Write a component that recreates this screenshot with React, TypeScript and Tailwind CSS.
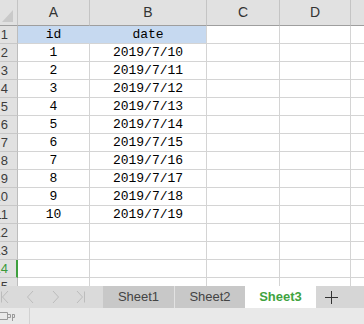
import React from "react";

const rows: [string, string][] = [
  ["id", "date"],
  ["1", "2019/7/10"],
  ["2", "2019/7/11"],
  ["3", "2019/7/12"],
  ["4", "2019/7/13"],
  ["5", "2019/7/14"],
  ["6", "2019/7/15"],
  ["7", "2019/7/16"],
  ["8", "2019/7/17"],
  ["9", "2019/7/18"],
  ["10", "2019/7/19"],
  ["", ""],
  ["", ""],
  ["", ""],
  ["", ""],
];

const sans = { fontFamily: '"Liberation Sans", Arial, sans-serif' };
const mono = { fontFamily: '"Liberation Mono", "Courier New", monospace' };

function ColHead({ label, last }: { label: string; last?: boolean }) {
  return (
    <div
      className={`h-[26px] bg-[#e1e1e1] border-b border-[#9e9e9e] ${last ? "" : "border-r border-r-[#c4c4c4]"} flex items-center justify-center text-[14px] text-[#333]`}
      style={sans}
    >
      {label}
    </div>
  );
}

export default function App() {
  return (
    <div className="w-[364px] h-[324px] flex flex-col overflow-hidden bg-white">
      <div className="flex-1 overflow-hidden">
        <div className="grid grid-cols-[18px_72px_117px_73px_71px_1fr]">
          {/* corner */}
          <div className="h-[26px] bg-[#e1e1e1] border-b border-[#9e9e9e] border-r border-r-[#c4c4c4] flex items-end justify-end pr-[4px] pb-[3px]">
            <svg width="11" height="12" viewBox="0 0 11 12">
              <polygon points="11,0 11,12 0,12" fill="#c9c9c9" />
            </svg>
          </div>
          <ColHead label="A" />
          <ColHead label="B" />
          <ColHead label="C" />
          <ColHead label="D" />
          <ColHead label="" last />
          {rows.map((r, i) => {
            const n = i + 1;
            const active = n === 14;
            const sel = n === 1;
            return (
              <React.Fragment key={i}>
                <div
                  className={`h-[18px] bg-[#e1e1e1] border-b border-b-[#c8c8c8] overflow-hidden ${active ? "border-r-2 border-r-[#3ea03e]" : "border-r border-r-[#bdbdbd]"}`}
                >
                  <div
                    className={`w-[30px] ml-[-22px] text-right text-[13px] leading-[17px] ${active ? "text-[#3a9a3a]" : "text-[#3c3c3c]"}`}
                    style={sans}
                  >
                    {n}
                  </div>
                </div>
                <div
                  className={`h-[18px] border-b border-r text-center text-[13px] leading-[17px] text-black ${sel ? "bg-[#c6d9f0] border-b-[#d4d4d4] border-r-[#c6d9f0]" : "border-[#d4d4d4]"}`}
                  style={mono}
                >
                  {r[0]}
                </div>
                <div
                  className={`h-[18px] border-b border-r border-[#d4d4d4] text-center text-[13px] leading-[17px] text-black ${sel ? "bg-[#c6d9f0]" : ""}`}
                  style={mono}
                >
                  {r[1]}
                </div>
                <div className="h-[18px] border-b border-r border-[#d4d4d4]" />
                <div className="h-[18px] border-b border-r border-[#d4d4d4]" />
                <div className="h-[18px] border-b border-[#d4d4d4]" />
              </React.Fragment>
            );
          })}
        </div>
      </div>

      {/* tab bar */}
      <div className="h-[22px] flex bg-[#d6d6d6] shrink-0" style={sans}>
        <div className="w-[103px] bg-[#dadada] flex items-center">
          <svg width="103" height="22" viewBox="0 0 103 22" fill="none" stroke="#bcbcbc" strokeWidth="1">
            <path d="M1.5 5.5 V16.5" />
            <path d="M8 5 L2.5 11 L8 17" />
            <path d="M33 5 L27.5 11 L33 17" />
            <path d="M53 5 L58.5 11 L53 17" />
            <path d="M77 5 L82.5 11 L77 17" />
            <path d="M84.5 5.5 V16.5" />
          </svg>
        </div>
        <div className="w-[72px] bg-[#c8c8c8] border-r border-[#e2e2e2] flex items-center justify-center text-[13px] text-[#444]">
          Sheet1
        </div>
        <div className="w-[70px] bg-[#c8c8c8] flex items-center justify-center text-[13px] text-[#444]">
          Sheet2
        </div>
        <div className="w-[71px] bg-white flex items-center justify-center text-[13px] font-bold text-[#3fa33f]">
          Sheet3
        </div>
        <div className="w-[30px] flex items-center justify-center">
          <svg width="13" height="13" viewBox="0 0 13 13" stroke="#333" strokeWidth="1">
            <path d="M6.5 0 V13 M0 6.5 H13" />
          </svg>
        </div>
      </div>

      {/* status bar */}
      <div className="h-[16px] bg-[#e9e9e9] flex items-center shrink-0">
        <div className="w-[30px] h-full border-r border-[#d2d2d2] flex items-center">
          <svg width="16" height="10" viewBox="0 0 16 10" fill="none" stroke="#9a9a9a" strokeWidth="1">
            <path d="M0 1.5 H7.5 V8.5 H0" />
            <path d="M7.5 3.5 H10.5 V6.5 H7.5" />
            <path d="M12.5 3 V10 M12.5 3.5 H14.5 V6.5 H12.5" />
          </svg>
        </div>
      </div>
    </div>
  );
}
